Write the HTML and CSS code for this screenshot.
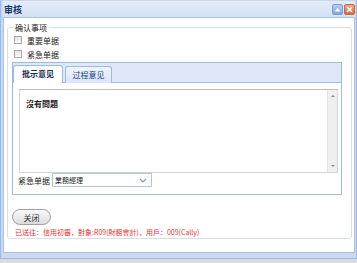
FILE: index.html
```html
<!DOCTYPE html>
<html lang="zh-CN">
<head>
  <meta charset="UTF-8">
  <title>审核</title>
  <link rel="stylesheet" href="styles.css">
</head>
<body>
  <div class="window">
    <div class="titlebar">
      <span class="title">审核</span>
      <div class="tools">
        <span class="tool tool-collapse">
          <svg width="7" height="5" viewBox="0 0 7 5"><path d="M0.5 4.5 L3.5 1 L6.5 4.5 Z" fill="#fff"/></svg>
        </span>
        <span class="tool tool-close">
          <svg width="7" height="7" viewBox="0 0 7 7"><path d="M1 1 L6 6 M6 1 L1 6" stroke="#fff" stroke-width="1.6"/></svg>
        </span>
      </div>
    </div>

    <div class="body">
      <fieldset class="confirm">
        <legend>确认事项</legend>
        <label class="check"><span class="box"></span>重要单据</label>
        <label class="check"><span class="box"></span>紧急单据</label>

        <div class="tabpanel">
          <div class="tabstrip">
            <span class="tab active">批示意见</span>
            <span class="tab">过程意见</span>
          </div>
          <div class="tabbody">
            <div class="textarea">
              <p>沒有問題</p>
              <div class="scrollbar">
                <span class="arrow up"></span>
                <span class="arrow down"></span>
              </div>
            </div>
            <div class="row">
              <span class="row-label">紧急单据</span>
              <div class="select">
                <span>業務經理</span>
                <svg width="8" height="5" viewBox="0 0 8 5"><path d="M1 1 L4 4 L7 1" fill="none" stroke="#7a9fd4" stroke-width="1.2"/></svg>
              </div>
            </div>
          </div>
        </div>

        <button class="btn">关闭</button>
        <p class="status">已送往：信用初審，對象:R09(財務會計)，用戶：009(Cally)</p>
      </fieldset>
    </div>
  </div>
</body>
</html>
```

FILE: styles.css
```css
* {
  margin: 0;
  padding: 0;
  box-sizing: border-box;
}

body {
  font-family: "Noto Sans CJK SC", "Noto Sans CJK TC", sans-serif;
  font-size: 8px;
  color: #222;
  background-color: #dcdcdc;
  width: 357px;
  height: 263px;
  overflow: hidden;
}

.window {
  width: 357px;
  height: 259px;
  background-color: #cad9f0;
  border: 1px solid #99bbe8;
  border-top-color: #c5d6ee;
  padding: 0 1px 5px 2px;
  display: flex;
  flex-direction: column;
}

.titlebar {
  height: 16px;
  display: flex;
  align-items: center;
  justify-content: space-between;
  padding-left: 1px;
  background: linear-gradient(#e4ecf8, #d3e1f4);
}

.title {
  font-weight: bold;
  font-size: 9px;
  color: #1a3560;
}

.tools {
  display: flex;
  gap: 1px;
}

.tool {
  width: 11px;
  height: 11px;
  border-radius: 2px;
  display: flex;
  align-items: center;
  justify-content: center;
}

.tool-collapse {
  background: linear-gradient(#b5cdf2, #7fa3df);
  border: 1px solid #7d9ed6;
}

.tool-close {
  background: linear-gradient(#f5a883, #dc6535);
  border: 1px solid #c9683f;
}

.body {
  flex: 1;
  background-color: #fff;
  border: 1px solid #a9c3e8;
  padding: 0 2px 0 3px;
}

.confirm {
  border: 1px solid #d8dee6;
  border-radius: 3px;
  padding: 0 5px 1px 4px;
  margin-top: 4px;
}

.confirm legend {
  padding: 0 2px;
  margin-left: 1px;
  line-height: 11px;
  font-size: 8px;
}

.check {
  display: flex;
  align-items: center;
  gap: 5px;
  height: 14px;
  padding-left: 2px;
}

.box {
  width: 8px;
  height: 8px;
  border: 1px solid #a8a8a8;
  background: linear-gradient(#e2e2e2, #fafafa);
}

.tabpanel {
  margin-top: 1px;
  border: 1px solid #99bbe8;
  width: 330px;
}

.tabstrip {
  background-color: #dfe8f6;
  border-bottom: 1px solid #99bbe8;
  height: 20px;
  display: flex;
  align-items: flex-end;
  gap: 2px;
  padding-left: 0;
}

.tab {
  height: 17px;
  width: 47px;
  text-align: center;
  border: 1px solid #99bbe8;
  border-bottom: none;
  border-radius: 3px 3px 0 0;
  background: linear-gradient(#f0f5fc, #d9e5f6);
  color: #15428b;
  line-height: 16px;
  margin-bottom: -1px;
}

.tab.active {
  background: #fff;
  font-weight: bold;
  color: #1a2c4e;
  height: 18px;
  width: 50px;
}

.tabbody {
  padding: 6px 3px 7px 6px;
}

.textarea {
  height: 84px;
  border: 1px solid #d4d4d4;
  border-top-color: #c0c0c0;
  position: relative;
  padding: 9px 0 0 6px;
}

.textarea p {
  font-weight: bold;
  line-height: 10px;
}

.scrollbar {
  position: absolute;
  top: 0;
  right: 0;
  bottom: 0;
  width: 10px;
  background-color: #efefef;
  border-left: 1px solid #e2e2e2;
  display: flex;
  flex-direction: column;
  justify-content: space-between;
  align-items: center;
  padding: 5px 0;
}

.arrow {
  width: 0;
  height: 0;
  border-left: 2px solid transparent;
  border-right: 2px solid transparent;
}

.arrow.up {
  border-bottom: 2px solid #8a8a8a;
}

.arrow.down {
  border-top: 2px solid #8a8a8a;
}

.row {
  display: flex;
  align-items: center;
  gap: 2px;
  height: 14px;
}

.row-label {
  margin-left: -1px;
}

.select {
  width: 100px;
  height: 14px;
  border: 1px solid #b7c4d8;
  display: flex;
  align-items: center;
  justify-content: space-between;
  padding: 0 4px 0 2px;
  font-size: 7px;
}

.btn {
  display: block;
  margin-top: 14px;
  width: 39px;
  height: 16px;
  border: 1px solid #a2a2a2;
  border-radius: 8px;
  background: linear-gradient(#fbfbfb, #dcdcdc);
  font-family: inherit;
  font-size: 8px;
  color: #333;
}

.status {
  margin-top: 2px;
  padding-left: 3px;
  line-height: 10px;
  color: #ee3030;
  font-size: 7px;
}
```
